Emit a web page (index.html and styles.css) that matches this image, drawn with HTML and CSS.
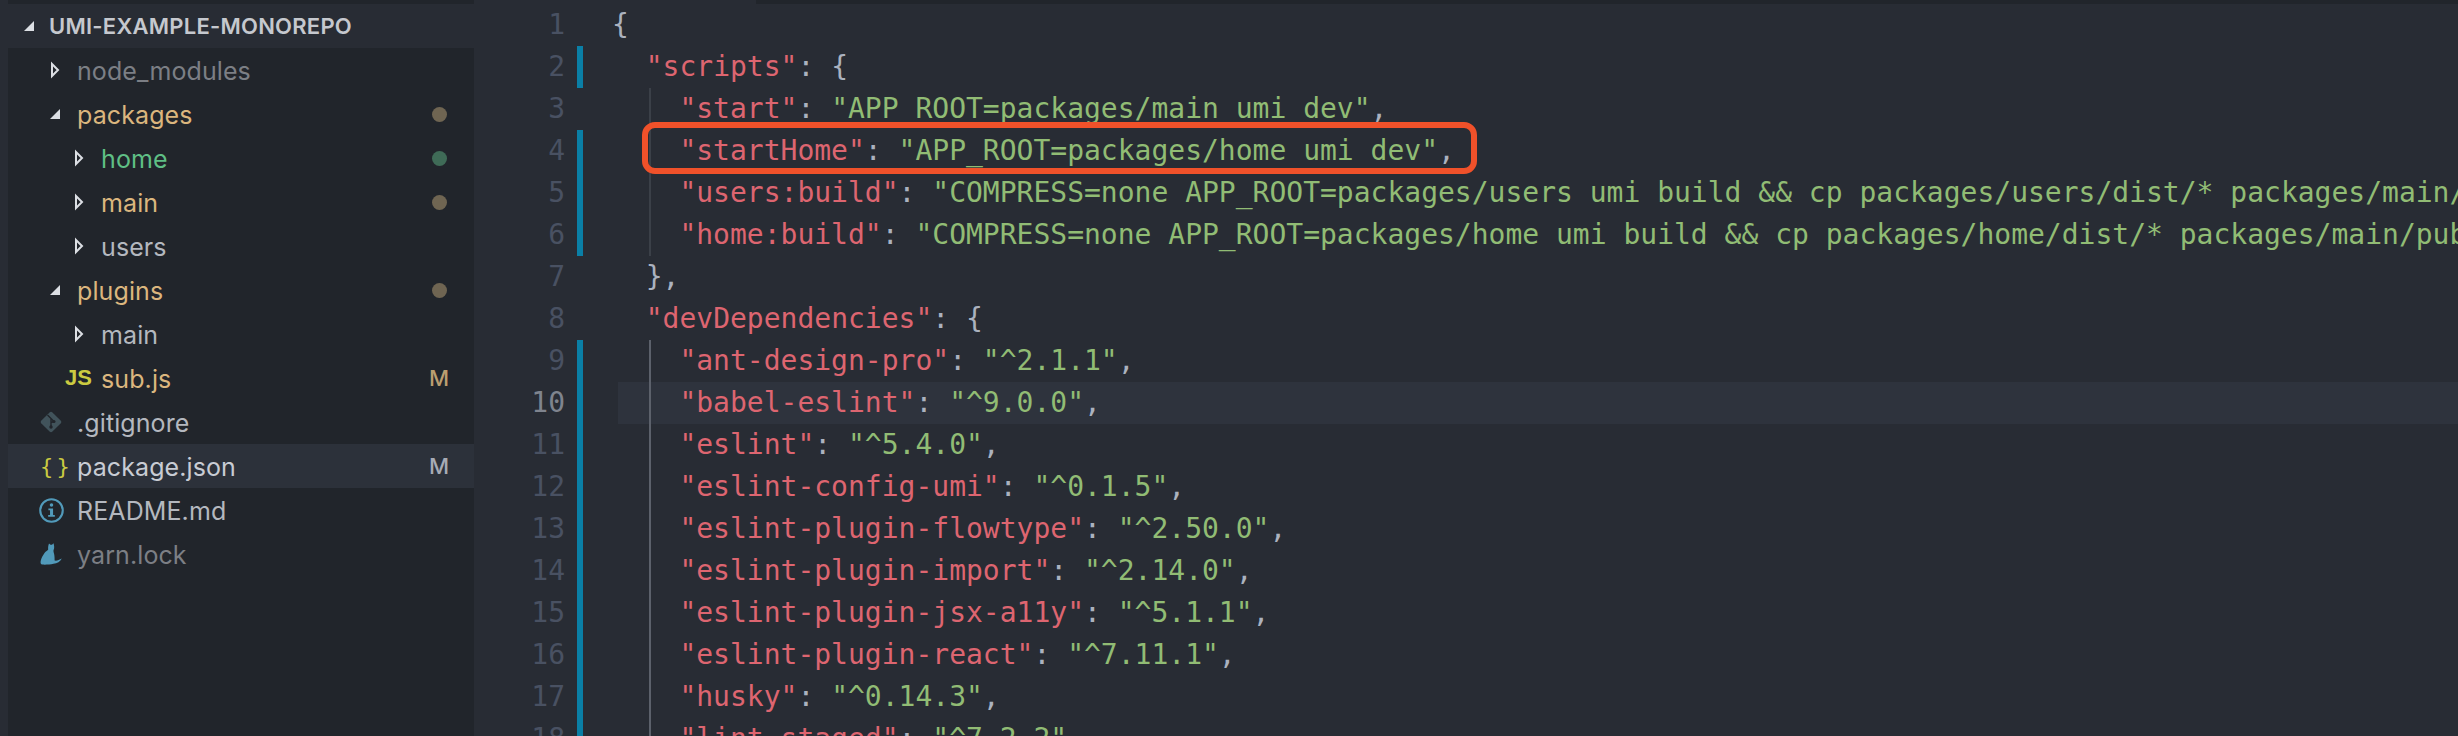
FILE: index.html
```html
<!DOCTYPE html>
<html lang="en">
<head>
<meta charset="utf-8">
<title>package.json - umi-example-monorepo</title>
<link rel="stylesheet" href="styles.css">
</head>
<body>
<div class="app">
  <aside class="sidebar">
    <div class="project">
      <svg class="tw-open" viewBox="0 0 12 12"><polygon points="11,1 11,11 1,11"/></svg>
      <span class="project-name">UMI-EXAMPLE-MONOREPO</span>
    </div>
    <div class="row d1 dim">
      <svg class="tw" viewBox="0 0 12 18"><polygon points="3,3 9,9 3,15"/></svg>
      <span class="name">node_modules</span>
    </div>
    <div class="row d1 mod">
      <svg class="tw-open" viewBox="0 0 12 12"><polygon points="11,1 11,11 1,11"/></svg>
      <span class="name">packages</span>
      <span class="status"><i class="dot dot-mod"></i></span>
    </div>
    <div class="row d2 new">
      <svg class="tw" viewBox="0 0 12 18"><polygon points="3,3 9,9 3,15"/></svg>
      <span class="name">home</span>
      <span class="status"><i class="dot dot-new"></i></span>
    </div>
    <div class="row d2 mod">
      <svg class="tw" viewBox="0 0 12 18"><polygon points="3,3 9,9 3,15"/></svg>
      <span class="name">main</span>
      <span class="status"><i class="dot dot-mod"></i></span>
    </div>
    <div class="row d2">
      <svg class="tw" viewBox="0 0 12 18"><polygon points="3,3 9,9 3,15"/></svg>
      <span class="name">users</span>
    </div>
    <div class="row d1 mod">
      <svg class="tw-open" viewBox="0 0 12 12"><polygon points="11,1 11,11 1,11"/></svg>
      <span class="name">plugins</span>
      <span class="status"><i class="dot dot-mod"></i></span>
    </div>
    <div class="row d2">
      <svg class="tw" viewBox="0 0 12 18"><polygon points="3,3 9,9 3,15"/></svg>
      <span class="name">main</span>
    </div>
    <div class="row file d2 mod">
      <span class="ficon"><span class="js-glyph">JS</span></span>
      <span class="name">sub.js</span>
      <span class="status letter letter-mod">M</span>
    </div>
    <div class="row file d1">
      <span class="ficon">
        <svg class="fsvg" viewBox="0 0 22 22">
          <rect class="git-body" x="3.2" y="3.2" width="15.6" height="15.6" rx="2" transform="rotate(45 11 11)"/>
          <path class="git-line" d="M7.5 4 L14 10.5 M11 7.5 V16 M11 11.5 L14 10.5"/>
          <circle class="git-node" cx="11" cy="16" r="1.7"/>
          <circle class="git-node" cx="14" cy="10.5" r="1.5"/>
        </svg>
      </span>
      <span class="name">.gitignore</span>
    </div>
    <div class="row file d1 selected">
      <span class="ficon"><span class="json-glyph">{ }</span></span>
      <span class="name">package.json</span>
      <span class="status letter letter-sel">M</span>
    </div>
    <div class="row file d1">
      <span class="ficon">
        <svg class="fsvg info" viewBox="0 0 24 24">
          <circle class="info-ring" cx="12" cy="12" r="10.8"/>
          <circle class="info-fill" cx="12" cy="6.8" r="1.7"/>
          <path class="info-fill" d="M9 10 H13.5 V16.2 H15.2 V18 H8.8 V16.2 H10.6 V11.8 H9 Z"/>
        </svg>
      </span>
      <span class="name">README.md</span>
    </div>
    <div class="row file d1 dim">
      <span class="ficon">
        <svg class="fsvg" viewBox="0 0 22 22">
          <path class="cat" d="M9 .5 L10.5 1.8 L12 1.8 L13.5 .2 C14.2 2.5 14.6 5 13.6 7 C13.3 8 13.6 9 14 10.5 C14.6 13 14.6 15 14.6 17.5 C16.6 18 19 17 21.8 15.5 C20.5 18.5 17 20.5 13.5 20.8 C10 21.6 5 21.8 2.5 21.6 C.4 21.4 .3 19.5 .8 17.5 C1.3 15 2.8 12.5 4.5 10 C6 8 7.6 7.5 8.2 6.5 C8 4.5 8.2 2.5 9 .5 Z"/>
        </svg>
      </span>
      <span class="name">yarn.lock</span>
    </div>
  </aside>

  <main class="editor">
    <div class="tab-edge"></div>
    <div class="line"><span class="num">1</span><span class="git"></span><span class="code"><span class="txt"><b class="p">{</b></span></span></div>
    <div class="line"><span class="num">2</span><span class="git on"></span><span class="code"><span class="ind"></span><span class="txt"><b class="k">"scripts"</b><b class="p">: {</b></span></span></div>
    <div class="line"><span class="num">3</span><span class="git"></span><span class="code"><span class="ind"></span><span class="ind guide"></span><span class="txt"><b class="k">"start"</b><b class="p">: </b><b class="s">"APP_ROOT=packages/main umi dev"</b><b class="p">,</b></span></span></div>
    <div class="line line-callout"><span class="num">4</span><span class="git on"></span><span class="code"><span class="ind"></span><span class="ind guide"></span><span class="txt"><b class="k">"startHome"</b><b class="p">: </b><b class="s">"APP_ROOT=packages/home umi dev"</b><b class="p">,</b></span><span class="callout"></span></span></div>
    <div class="line"><span class="num">5</span><span class="git on"></span><span class="code"><span class="ind"></span><span class="ind guide"></span><span class="txt"><b class="k">"users:build"</b><b class="p">: </b><b class="s">"COMPRESS=none APP_ROOT=packages/users umi build &amp;&amp; cp packages/users/dist/* packages/main/public/users"</b></span></span></div>
    <div class="line"><span class="num">6</span><span class="git on"></span><span class="code"><span class="ind"></span><span class="ind guide"></span><span class="txt"><b class="k">"home:build"</b><b class="p">: </b><b class="s">"COMPRESS=none APP_ROOT=packages/home umi build &amp;&amp; cp packages/home/dist/* packages/main/public/home"</b></span></span></div>
    <div class="line"><span class="num">7</span><span class="git"></span><span class="code"><span class="ind"></span><span class="txt"><b class="p">},</b></span></span></div>
    <div class="line"><span class="num">8</span><span class="git"></span><span class="code"><span class="ind"></span><span class="txt"><b class="k">"devDependencies"</b><b class="p">: {</b></span></span></div>
    <div class="line"><span class="num">9</span><span class="git on"></span><span class="code"><span class="ind"></span><span class="ind guide-on"></span><span class="txt"><b class="k">"ant-design-pro"</b><b class="p">: </b><b class="s">"^2.1.1"</b><b class="p">,</b></span></span></div>
    <div class="line"><span class="num cur">10</span><span class="git on"></span><span class="code current"><span class="ind"></span><span class="ind guide-on"></span><span class="txt"><b class="k">"babel-eslint"</b><b class="p">: </b><b class="s">"^9.0.0"</b><b class="p">,</b></span></span></div>
    <div class="line"><span class="num">11</span><span class="git on"></span><span class="code"><span class="ind"></span><span class="ind guide-on"></span><span class="txt"><b class="k">"eslint"</b><b class="p">: </b><b class="s">"^5.4.0"</b><b class="p">,</b></span></span></div>
    <div class="line"><span class="num">12</span><span class="git on"></span><span class="code"><span class="ind"></span><span class="ind guide-on"></span><span class="txt"><b class="k">"eslint-config-umi"</b><b class="p">: </b><b class="s">"^0.1.5"</b><b class="p">,</b></span></span></div>
    <div class="line"><span class="num">13</span><span class="git on"></span><span class="code"><span class="ind"></span><span class="ind guide-on"></span><span class="txt"><b class="k">"eslint-plugin-flowtype"</b><b class="p">: </b><b class="s">"^2.50.0"</b><b class="p">,</b></span></span></div>
    <div class="line"><span class="num">14</span><span class="git on"></span><span class="code"><span class="ind"></span><span class="ind guide-on"></span><span class="txt"><b class="k">"eslint-plugin-import"</b><b class="p">: </b><b class="s">"^2.14.0"</b><b class="p">,</b></span></span></div>
    <div class="line"><span class="num">15</span><span class="git on"></span><span class="code"><span class="ind"></span><span class="ind guide-on"></span><span class="txt"><b class="k">"eslint-plugin-jsx-a11y"</b><b class="p">: </b><b class="s">"^5.1.1"</b><b class="p">,</b></span></span></div>
    <div class="line"><span class="num">16</span><span class="git on"></span><span class="code"><span class="ind"></span><span class="ind guide-on"></span><span class="txt"><b class="k">"eslint-plugin-react"</b><b class="p">: </b><b class="s">"^7.11.1"</b><b class="p">,</b></span></span></div>
    <div class="line"><span class="num">17</span><span class="git on"></span><span class="code"><span class="ind"></span><span class="ind guide-on"></span><span class="txt"><b class="k">"husky"</b><b class="p">: </b><b class="s">"^0.14.3"</b><b class="p">,</b></span></span></div>
    <div class="line"><span class="num">18</span><span class="git on"></span><span class="code"><span class="ind"></span><span class="ind guide-on"></span><span class="txt"><b class="k">"lint-staged"</b><b class="p">: </b><b class="s">"^7.2.2"</b><b class="p">,</b></span></span></div>
  </main>
</div>
</body>
</html>
```
FILE: styles.css
```css
* { box-sizing: border-box; }
html, body { margin: 0; height: 100%; overflow: hidden; background: #282c34; }

.app {
  display: flex;
  height: 736px;
  padding-left: 8px;
  overflow: hidden;
}

/* Sidebar */
.sidebar {
  flex: 0 0 466px;
  height: 100%;
  padding-top: 4px;
  background: #21252b;
  font-family: Inter, "Noto Sans", sans-serif;
  font-size: 25px;
  letter-spacing: 0.1px;
  color: #b4b8bf;
}
.project {
  display: flex;
  align-items: center;
  height: 44px;
  padding-left: 15px;
  background: #282c34;
  color: #c5c8ce;
  font-size: 22px;
  font-weight: 600;
  letter-spacing: 0.25px;
}
.project .tw-open { margin-right: 14px; }
.project-name { white-space: nowrap; }

.row {
  display: flex;
  align-items: center;
  height: 44px;
  padding-right: 24px;
}
.row.d1 { padding-left: 41px; }
.row.d2 { padding-left: 65px; }
.row.file.d1 { padding-left: 32px; }
.row.file.d2 { padding-left: 56px; }
.row.selected { background: #2c313a; color: #c8ccd4; }
.dim { color: #7c7f85; }
.mod { color: #dbb67e; }
.new { color: #5fbf85; }

.tw-open, .tw { flex: none; fill: #dcdfe4; }
.tw-open { width: 12px; height: 12px; margin-right: 16px; }
.tw {
  width: 12px;
  height: 18px;
  margin-right: 16px;
  fill: none;
  stroke: #dcdfe4;
  stroke-width: 2;
}

.name { white-space: nowrap; padding-top: 2px; }
.ficon {
  flex: none;
  display: flex;
  align-items: center;
  width: 37px;
  height: 100%;
}
.fsvg { width: 22px; height: 22px; }
.info { width: 25px; height: 25px; margin-left: -1px; }
.js-glyph {
  font-family: "Liberation Sans Narrow", "Liberation Sans", sans-serif;
  font-weight: 700;
  font-size: 22px;
  letter-spacing: 0;
  color: #cbcb41;
  margin-left: 1px;
}
.json-glyph {
  font-family: "DejaVu Sans Mono", monospace;
  font-weight: 400;
  font-size: 22px;
  letter-spacing: -5px;
  color: #cbcb41;
  white-space: pre;
}
.git-body { fill: #41535b; }
.git-line { fill: none; stroke: #21252b; stroke-width: 1.4; }
.git-node { fill: #21252b; }
.info-ring { fill: none; stroke: #519aba; stroke-width: 2; }
.info-fill { fill: #519aba; }
.cat { fill: #519aba; }

.status {
  flex: none;
  display: flex;
  align-items: center;
  justify-content: center;
  width: 22px;
  margin-left: auto;
}
.dot { display: block; width: 15px; height: 15px; border-radius: 50%; }
.dot-mod { background: #6f6552; }
.dot-new { background: #3f6b57; }
.letter { font-size: 22px; font-weight: 500; }
.letter-mod { color: #bb9e70; }
.letter-sel { color: #a7abb5; }

/* Editor */
.editor {
  flex: 1;
  min-width: 0;
  height: 100%;
  overflow: hidden;
  background: #282c34;
  font-family: "DejaVu Sans Mono", monospace;
  font-size: 28px;
  color: #abb2bf;
}
.tab-edge {
  height: 4px;
  margin-left: 282px;
  background: #21252b;
}
.line {
  display: flex;
  height: 42px;
  line-height: 42px;
}
.num {
  flex: 0 0 91px;
  text-align: right;
  color: #495162;
}
.num.cur { color: #7f848e; }
.git { flex: 0 0 6px; margin-left: 12px; }
.git.on { background: #0a7fa6; }
.code {
  flex: 1;
  min-width: 0;
  display: flex;
  margin-left: 29px;
  white-space: pre;
}
.code.current { background: linear-gradient(#2e333d, #2e333d) 6px 0 no-repeat; }
.ind { flex: none; width: 2ch; }
.guide { background: linear-gradient(#3b4048, #3b4048) 3px 0 / 2px 100% no-repeat; }
.guide-on { background: linear-gradient(#5c616b, #5c616b) 3px 0 / 2px 100% no-repeat; }
.txt { flex: none; }
.txt b { font-weight: 400; }
.k { color: #dd6570; }
.s { color: #91bc74; }
.p { color: #abb2bf; }

.line-callout .code { position: relative; }
.callout {
  position: absolute;
  left: 30px;
  top: -8px;
  width: 835px;
  height: 52px;
  border: 6px solid #f0512a;
  border-radius: 13px;
  z-index: 1;
}
```
